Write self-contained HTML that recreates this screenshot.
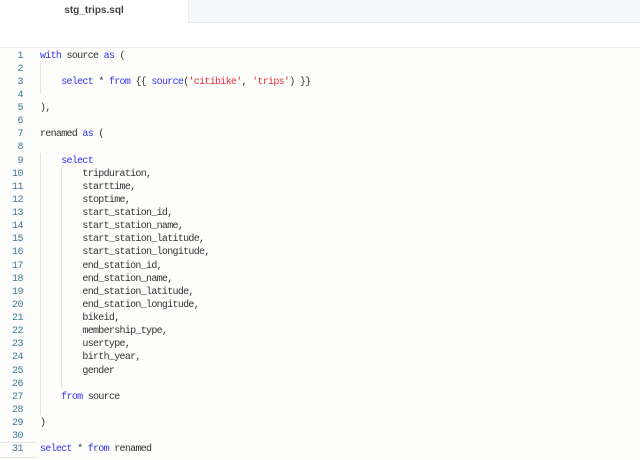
<!DOCTYPE html><html><head><style>
body{margin:0;width:640px;height:460px;background:#fff;position:relative;overflow:hidden;font-family:"Liberation Mono",monospace}
.tab{position:absolute;left:0;top:0;width:188px;height:22px;font:bold 10px "Liberation Sans",sans-serif;color:#444;text-align:center;line-height:22px}
.gray{position:absolute;left:188px;top:0;right:0;height:22px;background:#f8f9fb;border-left:1px solid #ececf0;border-bottom:1px solid #e8e9ee}
.ed{position:absolute;left:0;top:47px;right:0;bottom:0;background:#fdfdfb;border-top:1px solid #eeeeec}
.l{position:absolute;left:0;height:13px;font-size:10px;letter-spacing:-0.7px;line-height:13px;white-space:pre;color:#333}
.n{position:absolute;left:0;width:23px;text-align:right;color:#3a7a9c;font-size:10px;letter-spacing:-0.5px;line-height:13px}
.c{position:absolute;left:40px}
.k{color:#3333ee}.s{color:#e0303b}
.g{position:absolute;width:1px;background:#e4e4e4}
.cur{position:absolute;left:0;top:442px;width:37px;height:14px;border-top:1px solid #e6e6e6;border-bottom:1px solid #e6e6e6}
</style></head><body>
<div class="tab">stg_trips.sql</div><div class="gray"></div>
<div class="ed"></div>
<div class="cur"></div>
<div class="g" style="left:40px;top:62px;height:32px"></div>
<div class="g" style="left:40px;top:153px;height:262px"></div>
<div class="g" style="left:61px;top:166px;height:223px"></div>
<div id="code"></div>
<script>
var L=["<k>with</k> source <k>as</k> (","","    <k>select</k> * <k>from</k> {{ <k>source</k>(<s>'citibike'</s>, <s>'trips'</s>) }}","","),","","renamed <k>as</k> (","","    <k>select</k>","        tripduration,","        starttime,","        stoptime,","        start_station_id,","        start_station_name,","        start_station_latitude,","        start_station_longitude,","        end_station_id,","        end_station_name,","        end_station_latitude,","        end_station_longitude,","        bikeid,","        membership_type,","        usertype,","        birth_year,","        gender","","    <k>from</k> source","",")","","<k>select</k> * <k>from</k> renamed"];
var h="";for(var i=0;i<L.length;i++){var y=49.5+i*13.13;var t=L[i].replace(/<k>/g,'<span class="k">').replace(/<\/k>/g,'</span>').replace(/<s>/g,'<span class="s">').replace(/<\/s>/g,'</span>');
h+='<div class="l" style="top:'+y+'px;width:640px"><span class="n">'+(i+1)+'</span><span class="c">'+t+'</span></div>';}
document.getElementById("code").innerHTML=h;
</script>
</body></html>
